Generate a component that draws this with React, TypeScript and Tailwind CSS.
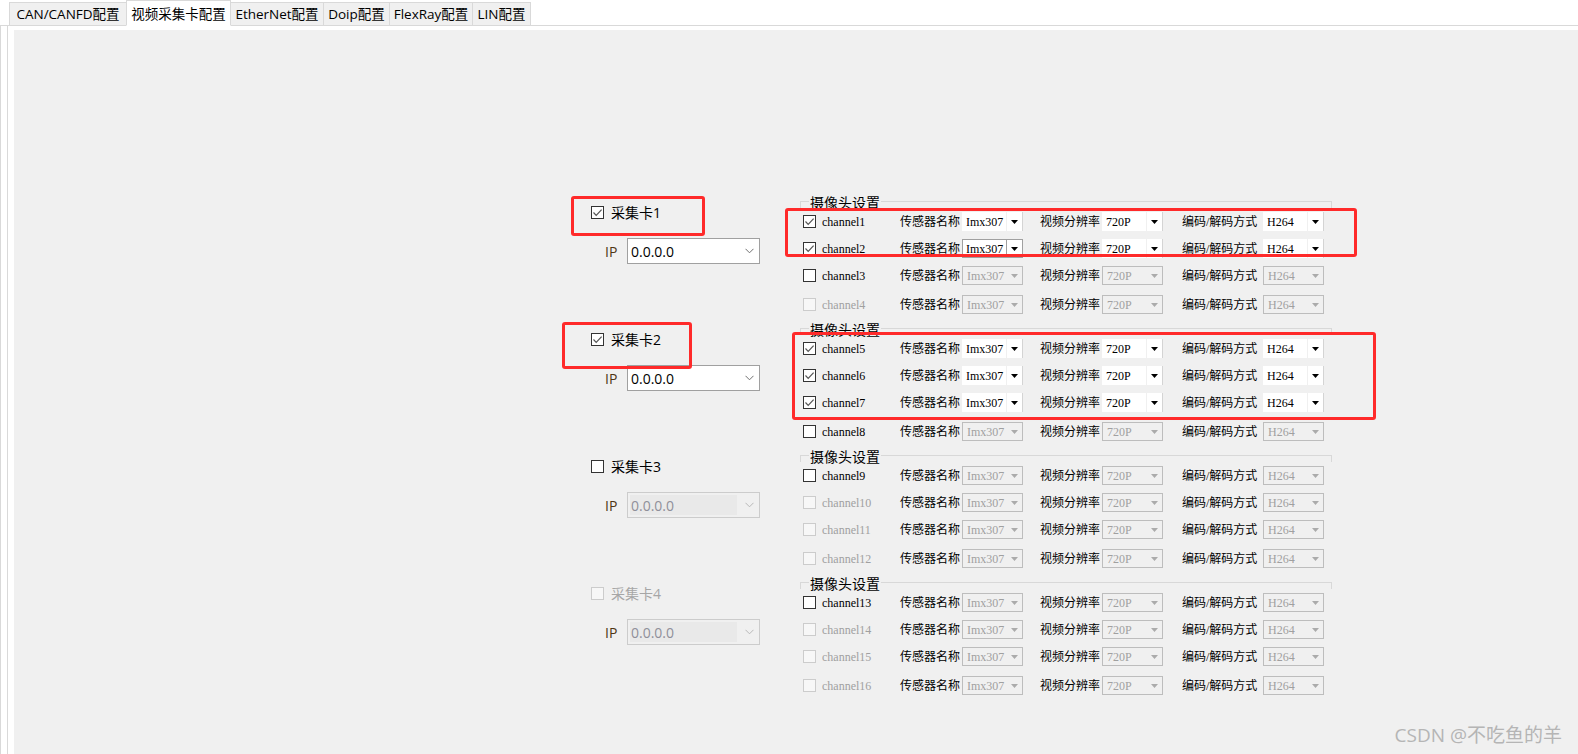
import React from "react";

type Mode = "a" | "b" | "off";

interface Row {
  n: number;
  checked: boolean;
  enabled: boolean;
  first: Mode;
  rest: Mode;
}

interface Card {
  idx: number;
  checked: boolean;
  enabled: boolean;
  ip: boolean;
  rows: Row[];
}

const tabs = [
  { label: "CAN/CANFD配置", w: "w-[118px]", active: false },
  { label: "视频采集卡配置", w: "w-[105px]", active: true },
  { label: "EtherNet配置", w: "w-[94px]", active: false },
  { label: "Doip配置", w: "w-[67px]", active: false },
  { label: "FlexRay配置", w: "w-[84px]", active: false },
  { label: "LIN配置", w: "w-[59px]", active: false },
];

const row = (n: number, checked: boolean, enabled: boolean, first: Mode, rest: Mode): Row => ({
  n,
  checked,
  enabled,
  first,
  rest,
});

const cards: Card[] = [
  {
    idx: 1,
    checked: true,
    enabled: true,
    ip: true,
    rows: [
      row(1, true, true, "a", "a"),
      row(2, true, true, "b", "a"),
      row(3, false, true, "off", "off"),
      row(4, false, false, "off", "off"),
    ],
  },
  {
    idx: 2,
    checked: true,
    enabled: true,
    ip: true,
    rows: [
      row(5, true, true, "a", "a"),
      row(6, true, true, "a", "a"),
      row(7, true, true, "a", "a"),
      row(8, false, true, "off", "off"),
    ],
  },
  {
    idx: 3,
    checked: false,
    enabled: true,
    ip: false,
    rows: [
      row(9, false, true, "off", "off"),
      row(10, false, false, "off", "off"),
      row(11, false, false, "off", "off"),
      row(12, false, false, "off", "off"),
    ],
  },
  {
    idx: 4,
    checked: false,
    enabled: false,
    ip: false,
    rows: [
      row(13, false, true, "off", "off"),
      row(14, false, false, "off", "off"),
      row(15, false, false, "off", "off"),
      row(16, false, false, "off", "off"),
    ],
  },
];

function Check({ checked, disabled }: { checked?: boolean; disabled?: boolean }) {
  return (
    <span
      className={`flex h-[13px] w-[13px] shrink-0 items-center justify-center border ${
        disabled ? "border-[#cccccc] bg-[#f7f7f7]" : "border-[#333333] bg-white"
      }`}
    >
      {checked && (
        <svg width="11" height="11" viewBox="0 0 11 11">
          <polyline points="1.5,5.5 4.2,8.3 9.6,2.6" fill="none" stroke="#555555" strokeWidth="1.2" />
        </svg>
      )}
    </span>
  );
}

function Arrow({ color }: { color: string }) {
  return (
    <svg width="7" height="4" viewBox="0 0 7 4">
      <polygon points="0,0 7,0 3.5,4" fill={color} />
    </svg>
  );
}

function Chevron({ color }: { color: string }) {
  return (
    <svg width="9" height="6" viewBox="0 0 9 6">
      <polyline points="0.5,0.8 4.5,4.8 8.5,0.8" fill="none" stroke={color} strokeWidth="1" />
    </svg>
  );
}

function Combo({ value, mode }: { value: string; mode: Mode }) {
  if (mode === "off") {
    return (
      <div className="flex h-[19px] w-[61px] shrink-0 items-center border border-[#bdbdbd] bg-[#f0f0f0]">
        <span className="flex-1 pl-[4px] text-[#a0a0a0]">{value}</span>
        <span className="flex w-[16px] justify-center">
          <Arrow color="#ababab" />
        </span>
      </div>
    );
  }
  if (mode === "b") {
    return (
      <div className="flex h-[19px] w-[61px] shrink-0 border border-[#a0a0a0] bg-white">
        <span className="flex flex-1 items-center pl-[3px] text-black">{value}</span>
        <span className="flex w-[16px] items-center justify-center border-l border-[#a0a0a0]">
          <Arrow color="#000000" />
        </span>
      </div>
    );
  }
  return (
    <div className="flex h-[19px] w-[61px] shrink-0 gap-px">
      <span className="flex flex-1 items-center bg-white pl-[4px] text-black">{value}</span>
      <span className="flex w-[16px] items-center justify-center border-r border-[#d4d4d4] bg-white">
        <Arrow color="#000000" />
      </span>
    </div>
  );
}

function IpBox({ enabled }: { enabled: boolean }) {
  if (enabled) {
    return (
      <div className="flex h-[26px] w-[133px] items-center border border-[#a0a0a0] bg-white pl-[3px] pr-[5px]">
        <span className="flex-1 text-[14px] text-black">0.0.0.0</span>
        <Chevron color="#707070" />
      </div>
    );
  }
  return (
    <div className="flex h-[26px] w-[133px] items-center border border-[#cccccc] bg-[#f0f0f0] p-[2px] pr-[5px]">
      <span className="flex h-full flex-1 items-center bg-[#e9e9e9] pl-[1px] text-[14px] text-[#8f8f99]">0.0.0.0</span>
      <span className="ml-[8px]">
        <Chevron color="#b8b8b8" />
      </span>
    </div>
  );
}

function ChannelRow({ r, extra }: { r: Row; extra?: boolean }) {
  return (
    <div className={`flex h-[27px] items-center ${extra ? "mt-[2px]" : ""}`}>
      <span className="ml-[3px]">
        <Check checked={r.checked} disabled={!r.enabled} />
      </span>
      <span
        className={`ml-[6px] w-[78px] font-['Liberation_Serif',serif] text-[12px] ${
          r.enabled ? "text-black" : "text-[#a0a0a0]"
        }`}
      >
        channel{r.n}
      </span>
      <span className="w-[62px] text-[12px]">传感器名称</span>
      <Combo value="Imx307" mode={r.first} />
      <span className="ml-[17px] w-[62px] text-[12px]">视频分辨率</span>
      <Combo value="720P" mode={r.rest} />
      <span className="ml-[19px] w-[81px] text-[12px]">编码/解码方式</span>
      <Combo value="H264" mode={r.rest} />
    </div>
  );
}

function CardBlock({ c }: { c: Card }) {
  return (
    <div className="flex h-[127px]">
      {/* capture card + IP */}
      <div className="w-[169px]">
        <div className="mt-[9px] flex h-[20px] items-center gap-[7px]">
          <Check checked={c.checked} disabled={!c.enabled} />
          <span className={`text-[14px] ${c.enabled ? "text-black" : "text-[#a6a6a6]"}`}>采集卡{c.idx}</span>
        </div>
        <div className="mt-[16px] flex items-center">
          <span className="ml-[14px] w-[22px] text-[14px] text-[#4f3514]">IP</span>
          <IpBox enabled={c.ip} />
        </div>
      </div>

      {/* camera settings group */}
      <div className="ml-[40px] w-[532px]">
        <div className="flex h-[15px] items-start">
          <div className="mt-[8px] h-[7px] w-[9px] border-l border-t border-[#d8d8d8]" />
          <span className="h-[15px] px-[1px] text-[14px] leading-[20px] text-black">摄像头设置</span>
          <div className="mt-[8px] h-[7px] flex-1 border-r border-t border-[#d8d8d8]" />
        </div>
        <div className="font-['Liberation_Serif','Noto_Sans_CJK_SC',serif] text-[12px]">
          {c.rows.map((r, i) => (
            <ChannelRow key={r.n} r={r} extra={i === 3} />
          ))}
        </div>
      </div>
    </div>
  );
}

export default function App() {
  return (
    <div className="relative flex h-[754px] w-[1578px] flex-col overflow-hidden bg-white font-['Segoe_UI','Open_Sans','Noto_Sans_CJK_SC',sans-serif] text-black">
      {/* Tabs */}
      <div className="flex h-[26px] items-end border-b border-[#d9d9d9] pl-[9px]">
        {tabs.map((t, i) =>
          t.active ? (
            <div
              key={t.label}
              className={`relative z-10 -mb-px -ml-px flex h-[26px] items-start justify-center border border-b-white border-[#d9d9d9] bg-white pt-[3px] text-[13.5px] ${t.w}`}
            >
              {t.label}
            </div>
          ) : (
            <div
              key={t.label}
              className={`flex h-[23px] items-center justify-center border-l border-r border-t border-[#d9d9d9] bg-[#f0f0f0] text-[13.5px] ${
                i > 0 ? "-ml-px" : ""
              } ${t.w}`}
            >
              {t.label}
            </div>
          )
        )}
      </div>

      {/* Body */}
      <div className="flex flex-1">
        <div className="w-px bg-[#d9d9d9]" />
        <div className="w-[6px]" />
        <div className="w-px bg-[#d9d9d9]" />
        <div className="w-[6px]" />
        <div className="flex flex-1 flex-col pt-[4px]">
          <div className="flex-1 bg-[#f0f0f0] pl-[577px] pt-[163px]">
            {cards.map((c) => (
              <CardBlock key={c.idx} c={c} />
            ))}
          </div>
        </div>
      </div>

      {/* annotation boxes */}
      <div className="absolute left-[571px] top-[196px] h-[40px] w-[134px] rounded-[3px] border-[3px] border-[#ff2a2a]" />
      <div className="absolute left-[785px] top-[208px] h-[49px] w-[572px] rounded-[3px] border-[3px] border-[#ff2a2a]" />
      <div className="absolute left-[562px] top-[322px] h-[47px] w-[130px] rounded-[3px] border-[3px] border-[#ff2a2a]" />
      <div className="absolute left-[792px] top-[332px] h-[88px] w-[584px] rounded-[3px] border-[3px] border-[#ff2a2a]" />

      {/* watermark */}
      <div className="absolute right-[16px] top-[724px] text-[19px] leading-[22px] text-[#b5b5b5]">CSDN @不吃鱼的羊</div>
    </div>
  );
}
